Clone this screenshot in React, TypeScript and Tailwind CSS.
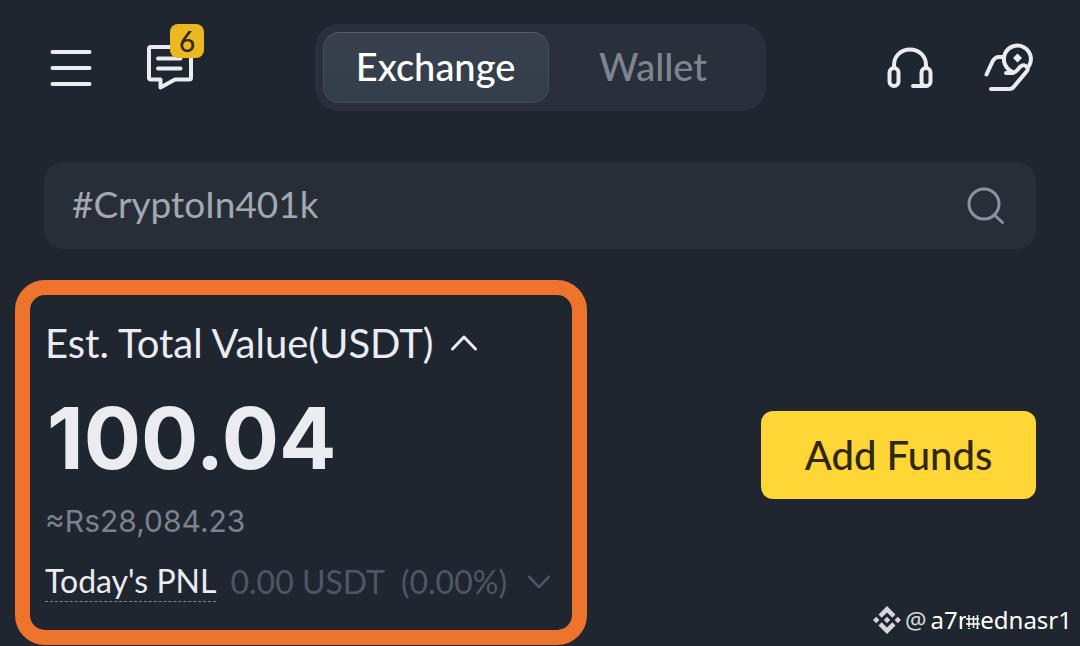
import React from 'react';

interface IconProps {
  className?: string;
}

const ChatIcon: React.FC<IconProps> = ({ className = '' }) => (
  <svg viewBox="0 0 48 48" fill="none" stroke="currentColor" strokeWidth="4" strokeLinecap="round" strokeLinejoin="round" className={className}>
    <path d="M3 4.500C3 3.700 3.700 3 4.500 3H43C44 3 45 3.700 45 4.500V34C45 35 44 35.500 43 35.500H29L14.500 43.500V35.500H4.500C3.700 35.500 3 35 3 34Z" />
    <path d="M12 14.500H34.500M12 24.500H34.500" />
  </svg>
);

const MenuIcon: React.FC<IconProps> = ({ className = '' }) => (
  <svg viewBox="0 0 42 40" fill="none" stroke="currentColor" strokeWidth="4" strokeLinecap="round" className={className}>
    <path d="M2.500 4H39.500M2.500 20H39.500M2.500 36H39.500" />
  </svg>
);

const HeadsetIcon: React.FC<IconProps> = ({ className = '' }) => (
  <svg viewBox="0 0 48 44" fill="none" stroke="currentColor" strokeWidth="4" strokeLinecap="round" strokeLinejoin="round" className={className}>
    <rect x="3.500" y="22" width="9" height="18" rx="4.500" />
    <rect x="35.500" y="22" width="9" height="18" rx="4.500" />
    <path d="M8 22V19C8 10 15 3.500 24 3.500S40 10 40 19V22M40 40H27" />
  </svg>
);

const HandCoinIcon: React.FC<IconProps> = ({ className = '' }) => (
  <svg viewBox="0 0 50 50" fill="none" stroke="currentColor" strokeWidth="4" strokeLinecap="round" strokeLinejoin="round" className={className}>
    <path d="M2.500 31.500L8.500 18.500C10 15.500 12 14 15 14H19" />
    <path d="M28 28.500A13.500 13.500 0 1 1 45 23" />
    <path d="M22 30H29C31 30 34 26 36.500 23.500C40 20.500 45.500 24 43 28L30 43.500C28.500 45.500 28 46 25.500 46H7" />
    <path d="M33.500 10.500L38 15L33.500 19.500L29 15Z" fill="currentColor" stroke="none" />
  </svg>
);

const SearchIcon: React.FC<IconProps> = ({ className = '' }) => (
  <svg viewBox="0 0 40 40" fill="none" stroke="currentColor" strokeWidth="3" strokeLinecap="round" className={className}>
    <circle cx="18" cy="18" r="15" />
    <path d="M29 29.500L36.500 36.500" />
  </svg>
);

const ChevronIcon: React.FC<IconProps> = ({ className = '' }) => (
  <svg viewBox="0 0 28 18" fill="none" stroke="currentColor" strokeWidth="3" strokeLinecap="round" strokeLinejoin="round" className={className}>
    <path d="M2.500 15L14 3L25.500 15" />
  </svg>
);

const BrandIcon: React.FC<IconProps> = ({ className = '' }) => (
  <svg viewBox="0 0 28 28" fill="currentColor" className={className}>
    <path d="M14 0L22.500 8.500L19.300 11.700L14 6.400L8.700 11.700L5.500 8.500Z" />
    <path d="M14 28L22.500 19.500L19.300 16.300L14 21.600L8.700 16.300L5.500 19.500Z" />
    <path d="M3.200 10.800L6.400 14L3.200 17.200L0 14ZM24.800 10.800L28 14L24.800 17.200L21.600 14ZM14 10.800L17.200 14L14 17.200L10.800 14Z" />
  </svg>
);

const HatchMark: React.FC<IconProps> = ({ className = '' }) => (
  <svg viewBox="0 0 14 14" fill="none" stroke="currentColor" strokeWidth="1.500" className={className}>
    <rect width="14" height="14" fill="#1f2630" stroke="none" />
    <path d="M0 5H13M0 10H14M3 1V13M7.500 2V14M11.500 1V14" />
  </svg>
);

const Header: React.FC = () => (
  <header className="flex items-center justify-between pr-0.5 pl-1.5">
    <div className="flex w-64 items-center gap-[54px]">
      <button type="button" aria-label="Menu">
        <MenuIcon className="h-10 w-[42px]" />
      </button>
      <button type="button" aria-label="Messages" className="relative">
        <ChatIcon className="size-12" />
        <span className="absolute -top-5 left-6 flex size-[34px] items-center justify-center rounded-lg bg-[#ecb81f] text-[28px] leading-none font-medium text-[#33260d]">
          6
        </span>
      </button>
    </div>
    <nav className="flex rounded-3xl bg-[#2a303b] p-2">
      <button type="button" className="h-[71px] w-[226px] rounded-2xl border border-[#414a58] border-t-[#555b68] bg-linear-to-b from-[#38404d] to-[#343e4b] pb-1 text-[38px] leading-12 font-medium text-white">
        Exchange
      </button>
      <button type="button" className="h-[71px] w-[209px] pb-1 text-[38px] leading-12 font-medium text-[#7e848f]">
        Wallet
      </button>
    </nav>
    <div className="flex w-[260px] items-center justify-end gap-[50px]">
      <button type="button" aria-label="Support">
        <HeadsetIcon className="h-11 w-12" />
      </button>
      <button type="button" aria-label="Pay">
        <HandCoinIcon className="size-[50px]" />
      </button>
    </div>
  </header>
);

const App: React.FC = () => {
  return (
    <main className="relative min-h-screen overflow-hidden bg-[#1f2630] px-11 pt-6 font-[Lato,sans-serif] text-[#eaecf2]">
      <Header />

      <label className="mt-[51px] flex h-[87px] items-center rounded-[20px] bg-[#282e38] pr-[30px] pl-7 text-[#a3a8b0]">
        <input
          type="text"
          aria-label="Search"
          defaultValue="#CryptoIn401k"
          className="min-w-0 flex-1 bg-transparent pb-1 text-[37px] leading-12 outline-none"
        />
        <SearchIcon className="size-10 text-[#8c929d]" />
      </label>

      <div className="-mx-[29px] mt-[31px] flex items-center justify-between pr-[29px]">
        <section className="w-[572px] rounded-[30px] border-[15px] border-[#ee732d] px-[15px] pt-6 pb-7">
          <button type="button" className="flex items-center gap-4 text-[40px] leading-12">
            Est. Total Value(USDT)
            <ChevronIcon className="h-[18px] w-7" />
          </button>
          <p className="mt-6 pl-0.5 font-[Inter,sans-serif] text-[85px] leading-24 font-bold">100.04</p>
          <p className="mt-3.5 font-[Inter,sans-serif] text-[30px] leading-10 text-[#7c828d]">≈Rs28,084.23</p>
          <div className="mt-5 flex items-center text-[32px] leading-10">
            <span className="border-b border-dashed border-[#7c828d]">Today's PNL</span>
            <button type="button" className="flex items-center text-[#4f5663]">
              <span className="ml-3.5">0.00 USDT</span>
              <span className="ml-4">(0.00%)</span>
              <ChevronIcon className="ml-5 h-4 w-6 rotate-180" />
            </button>
          </div>
        </section>
        <div className="pb-4">
          <button type="button" className="h-[88px] w-[275px] rounded-xl bg-[#fed635] text-[40px] leading-12 font-medium text-[#30270f]">
            Add Funds
          </button>
        </div>
      </div>

      <div className="absolute right-2 bottom-2.5 flex items-center gap-1 font-['Noto_Sans',sans-serif] text-2xl leading-8 text-white">
        <BrandIcon className="size-7 text-[#d5d7da]" />
        <span className="text-[#d5d7da]">@</span>
        <span>
          a7
          <span className="relative">
            m
            <HatchMark className="absolute right-0 bottom-2 size-3.5" />
          </span>
          ednasr1
        </span>
      </div>
    </main>
  );
};

export default App;
